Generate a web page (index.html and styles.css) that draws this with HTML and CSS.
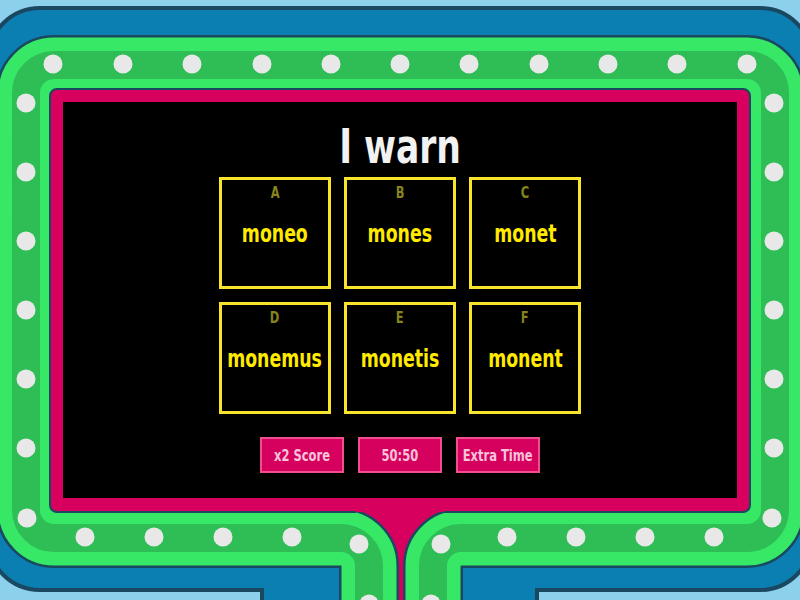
FILE: index.html
```html
<!DOCTYPE html>
<html>
<head>
<meta charset="utf-8">
<link rel="stylesheet" href="styles.css">
</head>
<body>
<div class="stage">
  <svg class="art" width="800" height="600" viewBox="0 0 800 600" aria-hidden="true">
    <rect x="0" y="0" width="800" height="600" fill="#8dd0ec"/>
    <path d="M 40 8 H 760 A 52 52 0 0 1 812 60 V 538 A 52 52 0 0 1 760 590 H 537 V 640 H 262 V 590 H 40 A 52 52 0 0 1 -12 538 V 60 A 52 52 0 0 1 40 8 Z" fill="#0b7fb1" stroke="#1b4861" stroke-width="4"/>
    <path d="M 340 480 H 460 V 566 H 420 V 620 H 380 V 566 H 340 Z" fill="#d8005f"/>
    <g fill="none" stroke-linecap="butt">
      <path d="M 369 640 V 566 A 28 28 0 0 0 341 538 H 54 A 28 28 0 0 1 26 510 V 93 A 28 28 0 0 1 54 65 H 747 A 28 28 0 0 1 775 93 V 510 A 28 28 0 0 1 747 538 H 461 A 28 28 0 0 0 433 566 V 640" stroke="#1b4861" stroke-width="60"/>
      <path d="M 369 640 V 566 A 28 28 0 0 0 341 538 H 54 A 28 28 0 0 1 26 510 V 93 A 28 28 0 0 1 54 65 H 747 A 28 28 0 0 1 775 93 V 510 A 28 28 0 0 1 747 538 H 461 A 28 28 0 0 0 433 566 V 640" stroke="#36e865" stroke-width="55"/>
      <path d="M 369 640 V 566 A 28 28 0 0 0 341 538 H 54 A 28 28 0 0 1 26 510 V 93 A 28 28 0 0 1 54 65 H 747 A 28 28 0 0 1 775 93 V 510 A 28 28 0 0 1 747 538 H 461 A 28 28 0 0 0 433 566 V 640" stroke="#2fbd56" stroke-width="28"/>
    </g>
    <rect x="50" y="89" width="700" height="423" rx="7" fill="#d8005f"/>
    <path d="M 356 512 H 57 A 7 7 0 0 1 50 505 V 96 A 7 7 0 0 1 57 89 H 743 A 7 7 0 0 1 750 96 V 505 A 7 7 0 0 1 743 512 H 444" fill="none" stroke="#1b4861" stroke-width="2"/>
    <g fill="#e8e8e8">
      <circle cx="53" cy="64" r="9.5"/><circle cx="123" cy="64" r="9.5"/><circle cx="192" cy="64" r="9.5"/>
      <circle cx="262" cy="64" r="9.5"/><circle cx="331" cy="64" r="9.5"/><circle cx="400" cy="64" r="9.5"/>
      <circle cx="469" cy="64" r="9.5"/><circle cx="539" cy="64" r="9.5"/><circle cx="608" cy="64" r="9.5"/>
      <circle cx="677" cy="64" r="9.5"/><circle cx="747" cy="64" r="9.5"/>
      <circle cx="26" cy="103" r="9.5"/><circle cx="26" cy="172" r="9.5"/><circle cx="26" cy="241" r="9.5"/>
      <circle cx="26" cy="310" r="9.5"/><circle cx="26" cy="379" r="9.5"/><circle cx="26" cy="448" r="9.5"/>
      <circle cx="27" cy="518" r="9.5"/>
      <circle cx="774" cy="103" r="9.5"/><circle cx="774" cy="172" r="9.5"/><circle cx="774" cy="241" r="9.5"/>
      <circle cx="774" cy="310" r="9.5"/><circle cx="774" cy="379" r="9.5"/><circle cx="774" cy="448" r="9.5"/>
      <circle cx="772" cy="518" r="9.5"/>
      <circle cx="85" cy="537" r="9.5"/><circle cx="154" cy="537" r="9.5"/><circle cx="223" cy="537" r="9.5"/>
      <circle cx="292" cy="537" r="9.5"/><circle cx="359" cy="544" r="9.5"/>
      <circle cx="441" cy="544" r="9.5"/><circle cx="507" cy="537" r="9.5"/><circle cx="576" cy="537" r="9.5"/>
      <circle cx="645" cy="537" r="9.5"/><circle cx="714" cy="537" r="9.5"/>
      <circle cx="369" cy="604" r="9.5"/><circle cx="431" cy="604" r="9.5"/>
    </g>
  </svg>
  <div class="screen">
    <h1 class="question">I warn</h1>
    <div class="answers">
      <div class="card"><span class="letter">A</span><span class="answer">moneo</span></div>
      <div class="card"><span class="letter">B</span><span class="answer">mones</span></div>
      <div class="card"><span class="letter">C</span><span class="answer">monet</span></div>
      <div class="card"><span class="letter">D</span><span class="answer">monemus</span></div>
      <div class="card"><span class="letter">E</span><span class="answer">monetis</span></div>
      <div class="card"><span class="letter">F</span><span class="answer">monent</span></div>
    </div>
    <div class="powerups">
      <div class="power"><span class="label">x2 Score</span></div>
      <div class="power"><span class="label">50:50</span></div>
      <div class="power"><span class="label">Extra Time</span></div>
    </div>
  </div>
</div>
</body>
</html>
```

FILE: styles.css
```css
html, body {
  margin: 0;
  padding: 0;
  background: #8dd0ec;
}

.stage {
  position: relative;
  width: 800px;
  height: 600px;
  overflow: hidden;
  box-sizing: border-box;
  padding: 102px 63px 0;
  font-family: "DejaVu Sans Condensed", "DejaVu Sans", "Liberation Sans", sans-serif;
  font-weight: 700;
}

.art {
  position: absolute;
  left: 0;
  top: 0;
  z-index: 0;
  display: block;
}

.screen {
  position: relative;
  z-index: 1;
  height: 396px;
  background: #000;
  box-sizing: border-box;
  padding-top: 20px;
  display: flex;
  flex-direction: column;
  align-items: center;
}

.question {
  margin: 0;
  font-size: 48px;
  line-height: 48px;
  font-weight: 700;
  color: #f2f2f2;
  white-space: nowrap;
  transform: scaleX(0.8);
}

.answers {
  margin-top: 7px;
  display: grid;
  grid-template-columns: repeat(3, 112px);
  grid-auto-rows: 112px;
  gap: 13px;
}

.card {
  box-sizing: border-box;
  border: 3px solid #f7e42b;
  display: grid;
  grid-template-columns: minmax(0, 1fr);
  grid-template-rows: minmax(0, 1fr);
  justify-items: center;
}

.letter,
.answer {
  grid-area: 1 / 1;
  white-space: nowrap;
  margin-left: -30px;
  margin-right: -30px;
  justify-self: center;
}

.letter {
  align-self: start;
  margin-top: 6px;
  font-size: 15px;
  line-height: 15px;
  color: #86841a;
  transform: scaleX(0.85);
}

.answer {
  align-self: center;
  font-size: 25px;
  color: #ffea00;
  transform: scaleX(0.77);
}

.powerups {
  margin-top: 23px;
  display: flex;
  gap: 14px;
}

.power {
  box-sizing: border-box;
  width: 84px;
  height: 36px;
  background: #d6005f;
  border: 2px solid #ef4f8e;
  color: #f9c3da;
  font-size: 16px;
  display: flex;
  align-items: center;
  justify-content: center;
}

.label {
  white-space: nowrap;
  transform: scaleX(0.8);
}
```
